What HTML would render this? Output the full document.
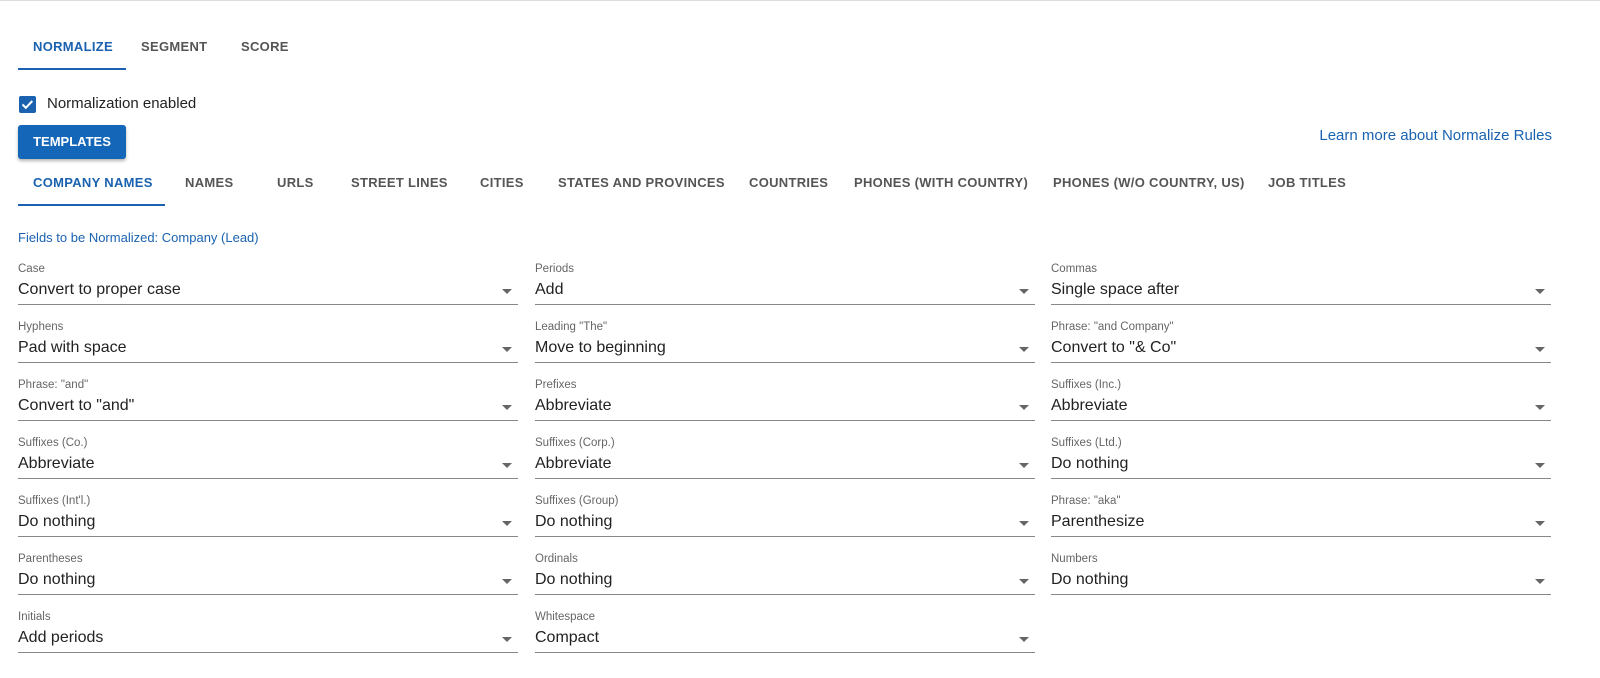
<!DOCTYPE html>
<html><head><style>
body{margin:0;width:1600px;height:678px;background:#fff;font-family:"Liberation Sans",sans-serif;position:relative;overflow:hidden;border-top:1px solid #ddd;box-sizing:border-box}
.a{position:absolute;white-space:nowrap}
.tab{font-size:13px;font-weight:bold;color:#555;letter-spacing:.3px}
.act{color:#1a62b0}
.lbl{font-size:11.5px;color:#666}
.val{font-size:16px;color:#222}
.line{position:absolute;height:1px;background:#888}
.arr{position:absolute;width:0;height:0;border-left:5px solid transparent;border-right:5px solid transparent;border-top:5px solid #666}
</style></head><body>
<div class="a tab act" style="left:33px;top:38px">NORMALIZE</div>
<div class="a tab" style="left:141px;top:38px">SEGMENT</div>
<div class="a tab" style="left:241px;top:38px">SCORE</div>
<div class="a" style="left:18px;top:67px;width:108px;height:2px;background:#1a62b0"></div>
<div class="a" style="left:19px;top:95px;width:17px;height:17px;background:#1a62b0;border-radius:2px">
<svg width="17" height="17" viewBox="0 0 17 17"><path d="M3.5 8.5l3.3 3.3 6.5-6.8" stroke="#fff" stroke-width="2" fill="none"/></svg></div>
<div class="a" style="left:47px;top:94px;font-size:15px;color:#222">Normalization enabled</div>
<div class="a" style="left:18px;top:124px;width:108px;height:34px;background:#1466b8;border-radius:3px;box-shadow:0 2px 3px rgba(0,0,0,.3);color:#fff;font-size:13px;font-weight:bold;text-align:center;line-height:34px">TEMPLATES</div>
<div class="a" style="right:48px;top:126px;font-size:15px;color:#1a62b0">Learn more about Normalize Rules</div>
<div class="a tab act" style="left:33px;top:174px">COMPANY NAMES</div>
<div class="a tab" style="left:185px;top:174px">NAMES</div>
<div class="a tab" style="left:277px;top:174px">URLS</div>
<div class="a tab" style="left:351px;top:174px">STREET LINES</div>
<div class="a tab" style="left:480px;top:174px">CITIES</div>
<div class="a tab" style="left:558px;top:174px">STATES AND PROVINCES</div>
<div class="a tab" style="left:749px;top:174px">COUNTRIES</div>
<div class="a tab" style="left:854px;top:174px">PHONES (WITH COUNTRY)</div>
<div class="a tab" style="left:1053px;top:174px">PHONES (W/O COUNTRY, US)</div>
<div class="a tab" style="left:1268px;top:174px">JOB TITLES</div>
<div class="a" style="left:18px;top:203px;width:147px;height:2px;background:#1a62b0"></div>
<div class="a" style="left:18px;top:229px;font-size:13px;color:#1a62b0">Fields to be Normalized: Company (Lead)</div>
<div id="f"></div>
<script>
var d=[["Case","Convert to proper case","Periods","Add","Commas","Single space after"],
["Hyphens","Pad with space","Leading \"The\"","Move to beginning","Phrase: \"and Company\"","Convert to \"& Co\""],
["Phrase: \"and\"","Convert to \"and\"","Prefixes","Abbreviate","Suffixes (Inc.)","Abbreviate"],
["Suffixes (Co.)","Abbreviate","Suffixes (Corp.)","Abbreviate","Suffixes (Ltd.)","Do nothing"],
["Suffixes (Int'l.)","Do nothing","Suffixes (Group)","Do nothing","Phrase: \"aka\"","Parenthesize"],
["Parentheses","Do nothing","Ordinals","Do nothing","Numbers","Do nothing"],
["Initials","Add periods","Whitespace","Compact"]];
var xs=[18,535,1051],h="";
d.forEach(function(r,i){var y=262+i*58;for(var c=0;c<r.length/2;c++){var x=xs[c];
h+='<div class="a lbl" style="left:'+x+'px;top:'+y+'px">'+r[c*2]+'</div>';
h+='<div class="a val" style="left:'+x+'px;top:'+(y+18)+'px">'+r[c*2+1].replace(/&/g,'&amp;')+'</div>';
h+='<div class="line" style="left:'+x+'px;top:'+(y+41)+'px;width:500px"></div>';
h+='<div class="arr" style="left:'+(x+484)+'px;top:'+(y+26)+'px"></div>';}});
document.getElementById('f').innerHTML=h;
</script>
</body></html>
